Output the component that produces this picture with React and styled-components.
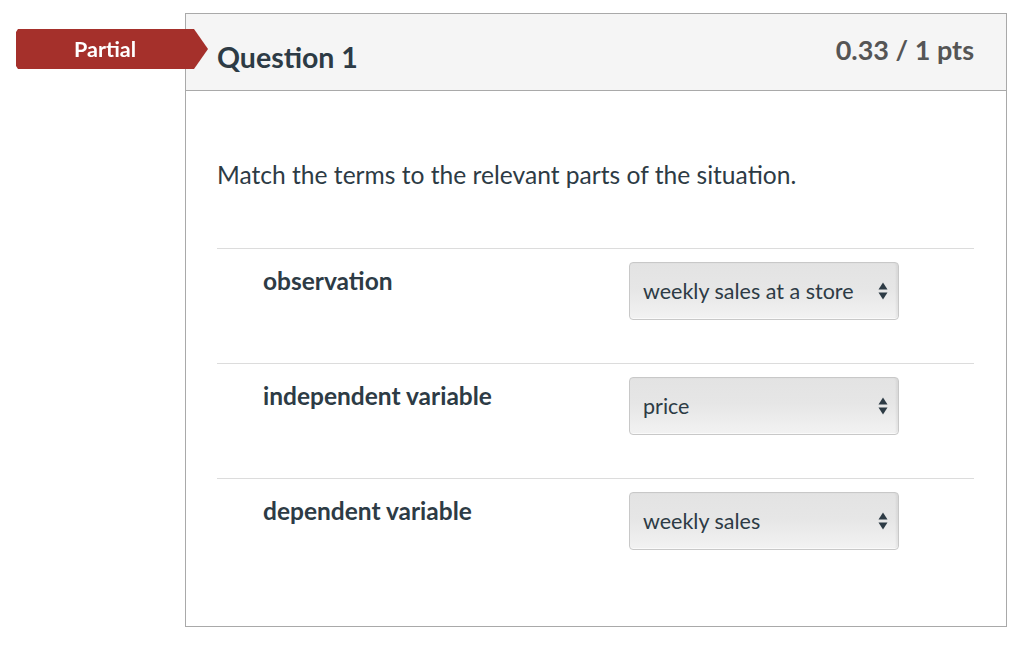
import React from "react";
import styled, { createGlobalStyle } from "styled-components";

const GlobalStyle = createGlobalStyle`
  html, body {
    margin: 0;
    padding: 0;
    background: #fff;
    font-family: Lato, "Liberation Sans", sans-serif;
    color: #2d3b45;
  }
`;

const rows = [
  { term: "observation", answer: "weekly sales at a store" },
  { term: "independent variable", answer: "price" },
  { term: "dependent variable", answer: "weekly sales" },
];

const App = () => {
  return (
    <>
      <GlobalStyle />
      <Page>
        <Card>
          <Badge>Partial</Badge>
          <Header>
            <Title>Question 1</Title>
            <Points>0.33 / 1 pts</Points>
          </Header>
          <Body>
            <Prompt>Match the terms to the relevant parts of the situation.</Prompt>
            {rows.map((r) => (
              <Row key={r.term}>
                <Term>{r.term}</Term>
                <Select>
                  <span>{r.answer}</span>
                  <Arrows viewBox="0 0 10 18">
                    <path d="M5 0.5 L9.5 7.5 L0.5 7.5 Z" fill="#2d3b45" />
                    <path d="M5 17.5 L9.5 10.5 L0.5 10.5 Z" fill="#2d3b45" />
                  </Arrows>
                </Select>
              </Row>
            ))}
          </Body>
        </Card>
      </Page>
    </>
  );
};

const Page = styled.div`
  padding: 13px 0 0 185px;
`;

const Card = styled.div`
  position: relative;
  width: 820px;
  height: 612px;
  border: 1px solid #a9a9a9;
  box-sizing: content-box;
`;

const Badge = styled.div`
  position: absolute;
  left: -170px;
  top: 15px;
  width: 192px;
  height: 40px;
  box-sizing: border-box;
  padding-right: 14px;
  display: flex;
  align-items: center;
  justify-content: center;
  background: #a5302b;
  color: #fff;
  font-weight: 700;
  font-size: 21.5px;
  clip-path: polygon(0 3px, 2px 0, 178px 0, 192px 20px, 178px 40px, 2px 40px, 0 37px);
  filter: drop-shadow(0 1px 0 #7e2420);
`;

const Header = styled.div`
  height: 76px;
  background: #f5f5f5;
  border-bottom: 1px solid #a9a9a9;
  display: flex;
  justify-content: space-between;
  padding: 0 32px 0 31px;
`;

const Title = styled.h2`
  margin: 27px 0 0;
  font-size: 28.5px;
  font-weight: 700;
  line-height: 32px;
  color: #2d3b45;
`;

const Points = styled.div`
  margin-top: 20px;
  font-size: 27px;
  font-weight: 700;
  line-height: 32px;
  color: #555;
`;

const Body = styled.div`
  padding: 0 32px 0 31px;
`;

const Prompt = styled.p`
  margin: 69px 0 58px;
  font-size: 24.6px;
  line-height: 30px;
`;

const Row = styled.div`
  height: 114px;
  border-top: 1px solid #dcdcdc;
  display: flex;
  justify-content: space-between;
  padding-left: 46px;
  padding-right: 75px;
`;

const Term = styled.div`
  margin-top: 17px;
  font-size: 24.5px;
  font-weight: 700;
  line-height: 30px;
`;

const Select = styled.div`
  margin-top: 13px;
  width: 270px;
  height: 58px;
  box-sizing: border-box;
  border: 1px solid #c8c8c8;
  border-radius: 4px;
  background: linear-gradient(to bottom, #e3e3e3 0%, #e6e6e6 45%, #f2f2f2 100%);
  box-shadow: inset 0 -1px 0 #fafafa, inset -2px 0 2px rgba(0, 0, 0, 0.05);
  display: flex;
  align-items: center;
  justify-content: space-between;
  padding: 0 10px 0 13px;
  font-size: 21.5px;
  color: #2d3b45;
`;

const Arrows = styled.svg`
  width: 10px;
  height: 18px;
`;

export default App;
